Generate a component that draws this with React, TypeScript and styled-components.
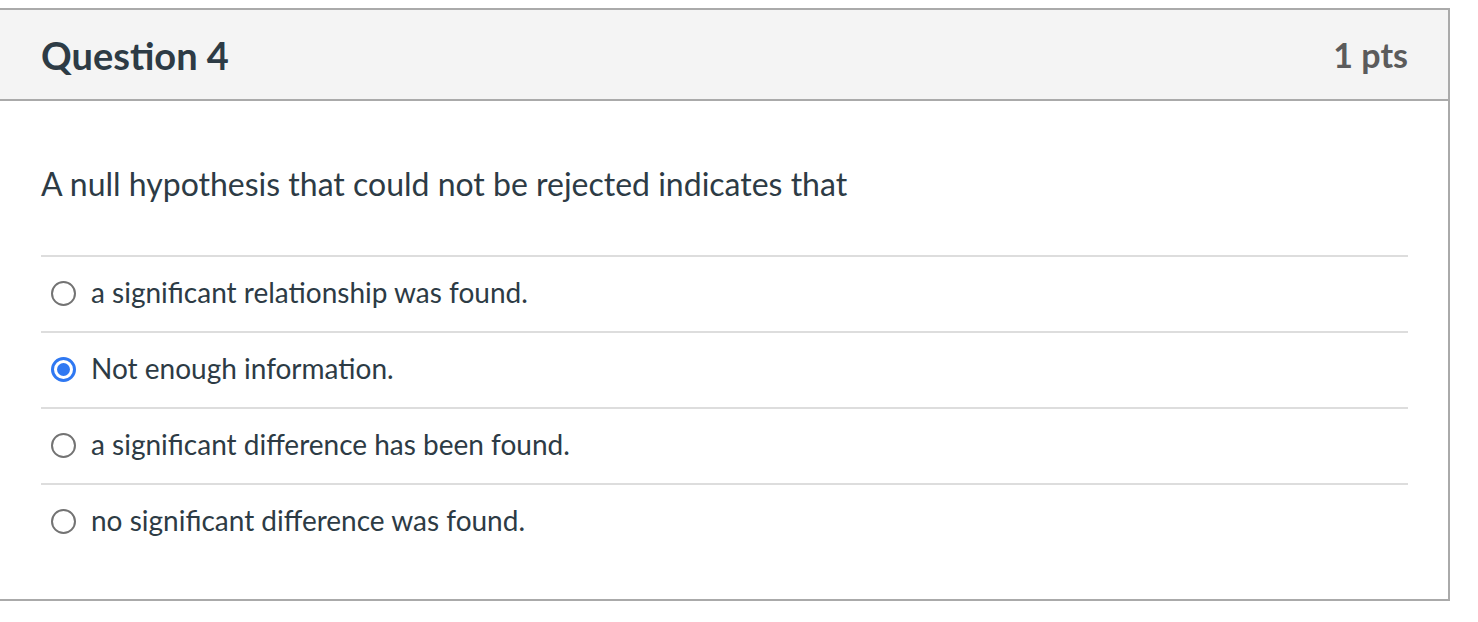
import styled, { createGlobalStyle } from "styled-components"

const Global = createGlobalStyle`
body {
  margin: 0;
  background: #fff;
  font-family: Lato, "Noto Sans", sans-serif;
  color: #2d3b45;
}
`

const Page = styled.div`
padding-top: 8px;
`

const Card = styled.div`
box-sizing: border-box;
width: 1452px;
margin-left: -2px;
border: 2px solid #aaaaaa;
background: #fff;
`

const Header = styled.div`
display: flex;
align-items: center;
justify-content: space-between;
height: 89px;
padding: 0 40px 0 41px;
background: #f4f4f4;
border-bottom: 2px solid #aaaaaa;
`

const Title = styled.h2`
margin: 0;
font-size: 38px;
font-weight: 700;
color: #2d3b45;
`

const Points = styled.span`
font-size: 34px;
font-weight: 700;
color: #5b5b5b;
`

const Body = styled.div`
padding: 63px 40px 40px 41px;
`

const Prompt = styled.p`
margin: 0 0 51px;
font-size: 32px;
line-height: 40px;
`

const Answers = styled.div`
display: flex;
flex-direction: column;
`

const Answer = styled.label`
box-sizing: border-box;
display: flex;
align-items: center;
gap: 15px;
height: 76px;
padding: 0 0 4px 10px;
border-top: 2px solid #dddddd;
font-size: 28px;
color: #2d3b45;
`

const Radio = styled.span<{ $checked?: boolean }>`
box-sizing: border-box;
flex: none;
display: flex;
align-items: center;
justify-content: center;
width: 25px;
height: 25px;
margin-top: 2px;
border-radius: 50%;
border: ${p => p.$checked ? "3px solid #2f78f2" : "2px solid #737373"};
background: #fff;

&::after {
  content: "";
  display: ${p => p.$checked ? "block" : "none"};
  width: 13px;
  height: 13px;
  border-radius: 50%;
  background: #2f78f2;
}
`

const options = [
  { text: "a significant relationship was found.", checked: false },
  { text: "Not enough information.", checked: true },
  { text: "a significant difference has been found.", checked: false },
  { text: "no significant difference was found.", checked: false },
]

export default function App() {
  return <>
    <Global />
    <Page>
      <Card>
        <Header>
          <Title>Question 4</Title>
          <Points>1 pts</Points>
        </Header>
        <Body>
          <Prompt>A null hypothesis that could not be rejected indicates that</Prompt>
          <Answers>
            {options.map(o => <Answer key={o.text}>
              <Radio $checked={o.checked} />
              {o.text}
            </Answer>)}
          </Answers>
        </Body>
      </Card>
    </Page>
  </>
}
